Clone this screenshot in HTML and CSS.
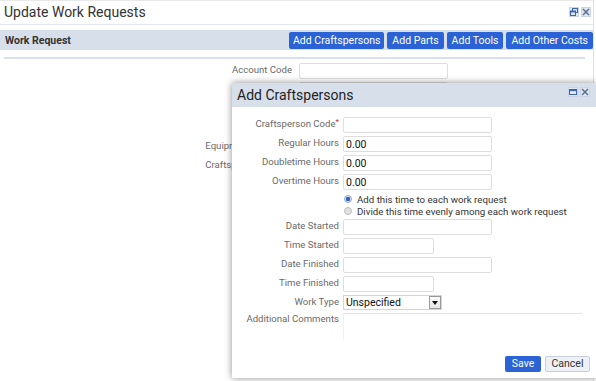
FILE: index.html
```html
<!DOCTYPE html>
<html>
<head>
<meta charset="utf-8">
<link rel="stylesheet" href="styles.css">
</head>
<body>
<div class="page">
  <div class="titlebar">
    <h1 class="title">Update Work Requests</h1>
    <div class="wintools">
      <span class="wicon"><svg width="8" height="8" viewBox="0 0 8 8"><rect x="2.5" y="0.5" width="5" height="4" fill="none" stroke="#3d63b3" stroke-width="1"/><rect x="0.5" y="3" width="5" height="4.5" fill="#dfe5ef" stroke="#3d63b3" stroke-width="1"/><line x1="0.5" y1="3.7" x2="5.5" y2="3.7" stroke="#3d63b3" stroke-width="1.4"/></svg></span>
      <span class="wicon"><svg width="8" height="8" viewBox="0 0 8 8"><path d="M1 1L7 7M7 1L1 7" stroke="#5a6f96" stroke-width="1.5"/></svg></span>
    </div>
  </div>
  <div class="panel-head">
    <span class="panel-title">Work Request</span>
    <div class="btns">
      <button class="btn">Add Craftspersons</button>
      <button class="btn">Add Parts</button>
      <button class="btn">Add Tools</button>
      <button class="btn">Add Other Costs</button>
    </div>
  </div>
  <div class="rule"></div>
  <div class="form">
    <label class="lbl">Account Code</label><div class="inp"></div>
    <label class="lbl"></label><div class="inp"></div>
    <label class="lbl"></label><div class="inp"></div>
    <label class="lbl"></label><div class="inp"></div>
    <label class="lbl">Equipment Standard</label><div class="inp"></div>
    <label class="lbl">Craftsperson Trades</label><div class="inp"></div>
  </div>
</div>

<div class="dialog">
  <div class="dlg-head">
    <span class="dlg-title">Add Craftspersons</span>
    <div class="wintools dlg-tools">
      <span class="wicon"><svg width="8" height="8" viewBox="0 0 8 8"><rect x="0.5" y="1.5" width="7" height="5" fill="none" stroke="#3d63b3" stroke-width="1"/><line x1="0.5" y1="2.3" x2="7.5" y2="2.3" stroke="#3d63b3" stroke-width="1.6"/></svg></span>
      <span class="wicon"><svg width="8" height="8" viewBox="0 0 8 8"><path d="M1 1L7 7M7 1L1 7" stroke="#5a6f96" stroke-width="1.5"/></svg></span>
    </div>
  </div>
  <div class="dlg-body">
    <label class="lbl">Craftsperson Code<span class="req">*</span></label><div class="inp wide"></div>
    <label class="lbl">Regular Hours</label><div class="inp wide">0.00</div>
    <label class="lbl">Doubletime Hours</label><div class="inp wide">0.00</div>
    <label class="lbl">Overtime Hours</label><div class="inp wide">0.00</div>
    <div class="radios">
      <div class="radio-row"><span class="radio on"></span><span>Add this time to each work request</span></div>
      <div class="radio-row"><span class="radio"></span><span>Divide this time evenly among each work request</span></div>
    </div>
    <label class="lbl">Date Started</label><div class="inp wide"></div>
    <label class="lbl">Time Started</label><div class="inp short"></div>
    <label class="lbl">Date Finished</label><div class="inp wide"></div>
    <label class="lbl">Time Finished</label><div class="inp short"></div>
    <label class="lbl">Work Type</label>
    <div class="select"><span class="sel-text">Unspecified</span><span class="sel-btn"><svg width="6" height="4" viewBox="0 0 6 4"><path d="M0 0H6L3 4Z" fill="#111"/></svg></span></div>
    <label class="lbl top">Additional Comments</label><div class="textarea"></div>
  </div>
  <div class="dlg-foot">
    <button class="btn save">Save</button>
    <button class="btn cancel">Cancel</button>
  </div>
</div>
</body>
</html>
```

FILE: styles.css
```css
* { box-sizing: border-box; }
html, body { margin: 0; padding: 0; }
body {
  font-family: Roboto, "Liberation Sans", sans-serif;
  width: 596px;
  height: 381px;
  overflow: hidden;
  background: #fff;
  position: relative;
}
.page {
  width: 594px;
  height: 381px;
  border-top: 1px solid #e8e8e8;
  border-right: 1px solid #dbe1ea;
}
.titlebar {
  height: 24px;
  border-bottom: 1px solid #e4e8ef;
  display: flex;
  justify-content: space-between;
  align-items: flex-start;
  padding: 0 2px 0 4px;
}
.title {
  margin: 0;
  font-size: 14px;
  font-weight: 400;
  color: #333;
  line-height: 23px;
}
.wintools { display: flex; gap: 2px; margin-top: 6px; }
.wicon {
  width: 10px;
  height: 10px;
  background: #e1e7f1;
  border: 1px solid #cdd5e3;
  display: flex;
  align-items: center;
  justify-content: center;
}
.wicon svg { display: block; }
.panel-head {
  margin-top: 5px;
  height: 20px;
  background: #d7dfeb;
  display: flex;
  align-items: center;
  justify-content: space-between;
  padding: 0 0 0 5px;
}
.panel-title { font-size: 10.5px; font-weight: 700; color: #333; }
.btns { display: flex; gap: 3px; }
.btn {
  height: 17px;
  border: none;
  border-radius: 2px;
  background: #2b63d6;
  color: #fff;
  font-family: Roboto, "Liberation Sans", sans-serif;
  font-size: 10.5px;
  padding: 0 5px;
  line-height: 17px;
}
.btn:first-child { padding: 0 4px; }
.rule {
  margin: 7px 8px 0 4px;
  height: 2px;
  background: #d9e0ec;
}
.form {
  margin-top: 4px;
  display: grid;
  grid-template-columns: 292px 149px;
  column-gap: 7px;
  row-gap: 3px;
}
.lbl {
  font-size: 9.6px;
  color: #6a6a6a;
  text-align: right;
  line-height: 13px;
  white-space: nowrap;
}
.lbl.top { line-height: 12px; }
.req { color: #c62828; font-size: 8px; vertical-align: top; line-height: 9px; }
.inp {
  height: 16px;
  border: 1px solid #dedede;
  border-radius: 2px;
  font-size: 10.5px;
  color: #111;
  padding-left: 2px;
  line-height: 16px;
}
.inp.wide { width: 149px; }
.inp.short { width: 91px; }
.dialog {
  position: absolute;
  left: 232px;
  top: 83px;
  width: 364px;
  height: 295px;
  background: #fff;
  box-shadow: 0 0 7px rgba(0, 0, 0, 0.45);
  display: flex;
  flex-direction: column;
}
.dlg-head {
  height: 24px;
  background: #d7dfeb;
  display: flex;
  justify-content: space-between;
  align-items: flex-start;
  padding: 0 6px 0 5px;
}
.dlg-title { font-size: 14px; color: #222; line-height: 24px; }
.dlg-tools { margin-top: 4px; }
.dlg-body {
  flex: 1;
  padding-top: 10px;
  display: grid;
  grid-template-columns: 107px 1fr;
  grid-auto-rows: min-content;
  column-gap: 4px;
  row-gap: 3px;
  align-content: start;
}
.radios {
  grid-column: 2;
  margin-bottom: -1px;
}
.radio-row {
  display: flex;
  align-items: center;
  height: 12px;
  font-size: 9.7px;
  color: #333;
  padding-left: 1px;
}
.radio {
  width: 8px;
  height: 8px;
  border-radius: 50%;
  background: #e2e2e2;
  border: 1px solid #bdbdbd;
  margin-right: 5px;
  flex: none;
}
.radio.on {
  background: radial-gradient(circle, #2b63c8 0 2px, #dfe6f1 2.5px);
  border-color: #9aa8bd;
}
.select {
  width: 99px;
  height: 15px;
  border: 1px solid #d4d4d4;
  display: flex;
  align-items: center;
  justify-content: space-between;
  font-size: 10.5px;
  color: #111;
  padding: 0 0 0 2px;
}
.sel-btn {
  width: 12px;
  height: 13px;
  border: 1px solid #9a9a9a;
  background: linear-gradient(#fafafa, #e6e6e6);
  display: flex;
  align-items: center;
  justify-content: center;
}
.textarea {
  width: 239px;
  height: 27px;
  border-top: 1px solid #e3e3e3;
  border-left: 1px solid #f0f0f0;
}
.dlg-foot {
  display: flex;
  justify-content: flex-end;
  gap: 4px;
  padding: 0 6px 6px 0;
}
.btn.save { width: 36px; height: 16px; line-height: 16px; padding: 0; }
.btn.cancel {
  width: 45px;
  height: 16px;
  line-height: 14px;
  padding: 0;
  background: #eef1f6;
  border: 1px solid #c9ced8;
  color: #333;
}
```
